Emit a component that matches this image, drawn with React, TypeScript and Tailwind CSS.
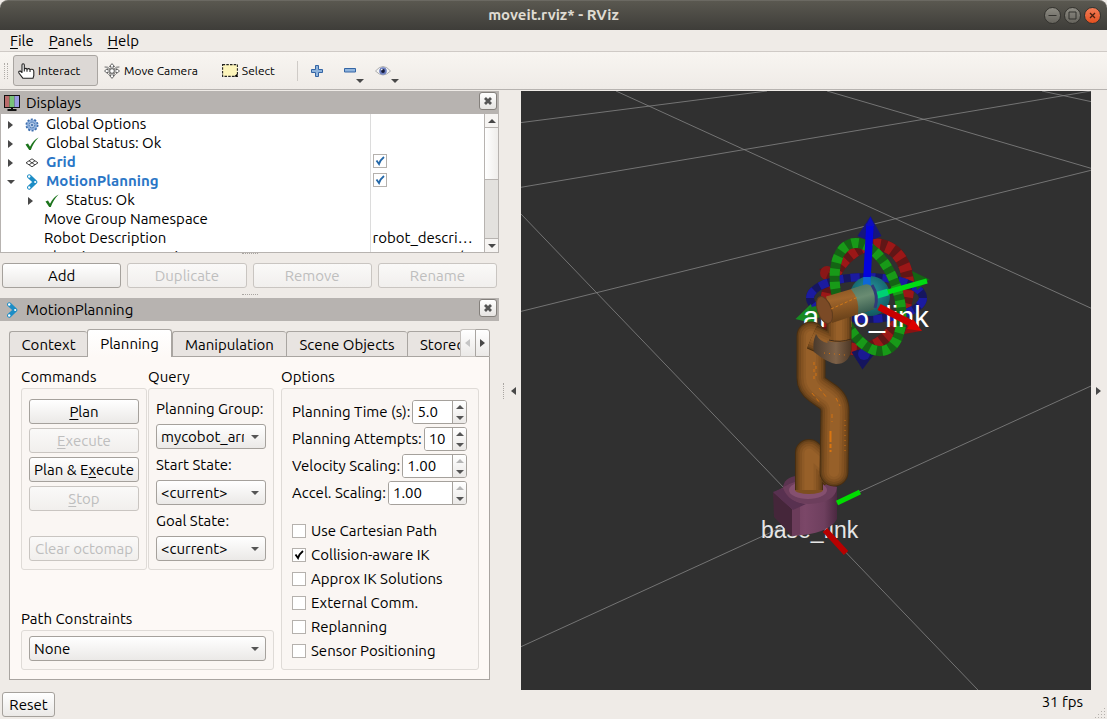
import React, { useState } from "react";

const displays = [
  { name: "Global Options", icon: "gear", arrow: "right", level: 0 },
  { name: "Global Status: Ok", icon: "check", arrow: "right", level: 0 },
  { name: "Grid", icon: "grid", arrow: "right", level: 0, checkable: true },
  { name: "MotionPlanning", icon: "motion", arrow: "down", level: 0, checkable: true },
  { name: "Status: Ok", icon: "check", arrow: "right", level: 1 },
  { name: "Move Group Namespace", level: 2 },
  { name: "Robot Description", level: 2, value: "robot_descri…" },
  { name: "Planning Scene Topic", level: 2, value: "move_group/…" },
];

const tabs = [
  { name: "Context", width: "w-[78px]" },
  { name: "Planning", width: "w-[85px]" },
  { name: "Manipulation", width: "w-[114px]" },
  { name: "Scene Objects", width: "w-[121px]" },
  { name: "Stored Scenes", width: "w-[120px]" },
];

const spins = [
  { label: "Planning Time (s):", value: "5.0" },
  { label: "Planning Attempts:", value: "10" },
  { label: "Velocity Scaling:", value: "1.00", max: true },
  { label: "Accel. Scaling:", value: "1.00", max: true },
];

const options = [
  "Use Cartesian Path",
  "Collision-aware IK",
  "Approx IK Solutions",
  "External Comm.",
  "Replanning",
  "Sensor Positioning",
];

const Triangle = ({ dir, className = "fill-[#484848]" }: { dir: string; className?: string }) => {
  const paths: Record<string, string> = {
    right: "M1 0 L6 4 L1 8 Z",
    left: "M6 0 L1 4 L6 8 Z",
    down: "M0 2 H8 L4 6 Z",
    up: "M0 6 H8 L4 2 Z",
  };
  return (
    <svg width="8" height="8" viewBox="0 0 8 8" className={className} aria-hidden="true">
      <path d={paths[dir]} />
    </svg>
  );
};

const MotionIcon = () => (
  <svg width="16" height="16" viewBox="0 0 16 16" aria-hidden="true">
    <path d="M5.2 2.4 L11.2 8 L5.2 13.6" fill="none" stroke="#1c8dc6" strokeWidth="4.2" strokeLinecap="round" strokeLinejoin="round" />
    <circle cx="5.2" cy="2.5" r="1.2" fill="#fff" />
    <circle cx="11.2" cy="8" r="1.1" fill="#fff" />
    <circle cx="5.2" cy="13.5" r="1.2" fill="#fff" />
  </svg>
);

const TreeIcon = ({ name }: { name?: string }) => {
  if (name === "gear") {
    return (
      <svg width="14" height="14" viewBox="0 0 14 14" aria-hidden="true">
        <circle cx="7" cy="7" r="5.6" fill="#8fb0dc" stroke="#3e6fae" strokeWidth="1.8" strokeDasharray="2 1.5" />
        <circle cx="7" cy="7" r="4.7" fill="#8fb0dc" />
        <circle cx="7" cy="7" r="2.8" fill="#b5cbe8" stroke="#3e6fae" strokeWidth="1" strokeDasharray="1.6 0.8" />
        <circle cx="7" cy="7" r="1" fill="#3465a4" />
      </svg>
    );
  }
  if (name === "check") {
    return (
      <svg width="14" height="14" viewBox="0 0 14 14" aria-hidden="true">
        <path d="M0.5 7.6 L3 6.6 L5 9.8 C7.5 5 10 2.3 13.6 0.5 C10 4 7.6 8 5.8 13 L4.2 13 Z" fill="#1c741c" />
      </svg>
    );
  }
  if (name === "grid") {
    return (
      <svg width="14" height="10" viewBox="0 0 14 10" fill="none" stroke="#444" aria-hidden="true">
        <path d="M7 0.8 L13 4.8 L7 8.8 L1 4.8 Z M4 2.8 L10 6.8 M10 2.8 L4 6.8" />
      </svg>
    );
  }
  if (name === "motion") return <MotionIcon />;
  return null;
};

const MenuItem = ({ first, rest }: { first: string; rest: string }) => (
  <button type="button" className="leading-5">
    <span className="underline underline-offset-2">{first}</span>
    {rest}
  </button>
);

const PushButton = ({ children, disabled, className = "w-full" }: { children: React.ReactNode; disabled?: boolean; className?: string }) => (
  <button
    type="button"
    disabled={disabled}
    className={`flex h-[25px] items-center justify-center whitespace-pre rounded-[3px] border border-[#a5a19c] bg-linear-to-b from-white to-[#ebe9e7] leading-5 disabled:border-[#c9c5c1] disabled:from-[#faf9f8] disabled:to-[#f1efed] disabled:text-[#bebebe] ${className}`}
  >
    {children}
  </button>
);

const ComboBox = ({ id, items }: { id: string; items: string[] }) => (
  <div className="grid items-center">
    <select
      id={id}
      className="col-start-1 row-start-1 h-[25px] w-full appearance-none overflow-hidden rounded-[3px] border border-[#a5a19c] bg-linear-to-b from-white to-[#ebe9e7] pl-1 pr-[21px] leading-5"
    >
      {items.map((item) => (
        <option key={item}>{item}</option>
      ))}
    </select>
    <span className="pointer-events-none col-start-1 row-start-1 mr-[7px] justify-self-end">
      <Triangle dir="down" className="fill-[#555]" />
    </span>
  </div>
);

const SpinBox = ({ label, value, max }: { label: string; value: string; max?: boolean }) => {
  const id = label.replace(/\W+/g, "-").toLowerCase();
  return (
    <div className="flex h-6 items-center gap-0.5">
      <label htmlFor={id} className="whitespace-nowrap">
        {label}
      </label>
      <div className="flex h-6 min-w-0 flex-1 overflow-hidden rounded-[3px] border border-[#a5a19c] bg-white">
        <input id={id} type="text" defaultValue={value} className="w-0 min-w-0 flex-1 bg-white pl-1 outline-none" />
        <div className="flex w-[14px] shrink-0 flex-col border-l border-[#a5a19c] bg-linear-to-b from-white to-[#ebe9e7]">
          <button type="button" aria-label={`Increase ${label}`} className="flex flex-1 items-center justify-center">
            <Triangle dir="up" className={max ? "fill-[#b5b5b5]" : "fill-[#555]"} />
          </button>
          <button type="button" aria-label={`Decrease ${label}`} className="flex flex-1 items-center justify-center">
            <Triangle dir="down" className="fill-[#555]" />
          </button>
        </div>
      </div>
    </div>
  );
};

const CheckBox = ({ id, label, defaultChecked, tint = "stroke-black" }: { id: string; label?: string; defaultChecked?: boolean; tint?: string }) => (
  <span className="grid size-[14px] shrink-0 place-items-center">
    <input
      id={id}
      type="checkbox"
      aria-label={label}
      defaultChecked={defaultChecked}
      className="peer col-start-1 row-start-1 size-[14px] appearance-none border border-[#b5b1ad] bg-white"
    />
    <svg viewBox="0 0 10 10" className={`pointer-events-none invisible col-start-1 row-start-1 size-[10px] fill-none peer-checked:visible ${tint}`} aria-hidden="true">
      <path d="M1.5 4.5 L4 8 C5 5 6.5 3 9 1" strokeWidth="1.9" />
    </svg>
  </span>
);

const DockTitle = ({ title, icon }: { title: string; icon: React.ReactNode }) => (
  <div className="flex h-[23px] items-center bg-[#b7b3b0] pl-1 pr-0.5">
    {icon}
    <h2 className="ml-1.5 flex-1 leading-5">{title}</h2>
    <button type="button" aria-label={`Close ${title}`} className="mt-px flex size-[18px] items-center justify-center self-start rounded-[3px] border border-[#84807c] bg-linear-to-b from-white to-[#e6e4e2]">
      <svg width="8" height="8" viewBox="0 0 8 8" stroke="#555" strokeWidth="2.8" aria-hidden="true">
        <path d="M1 1 L7 7 M7 1 L1 7" />
      </svg>
    </button>
  </div>
);

const Splitter = () => (
  <div className="flex h-[10px] justify-center">
    <div className="h-px w-4 border-t border-dotted border-[#a9a5a1]" />
  </div>
);

// stacked strokes, dark on the rim and light in the middle
const shades = [
  { inset: 0, color: "#4a2e10" },
  { inset: 2, color: "#63401a" },
  { inset: 5, color: "#75491d" },
  { inset: 9, color: "#835221" },
  { inset: 14, color: "#8e5a26" },
  { inset: 19, color: "#976029" },
];

const Tube = ({ d, width }: { d: string; width: number }) => (
  <g fill="none" strokeLinejoin="round">
    {shades.map((shade) => (
      <path key={shade.inset} d={d} stroke={shade.color} strokeWidth={Math.max(width - shade.inset, 2)} />
    ))}
  </g>
);

const RobotView = () => (
  <svg viewBox="521 91 570 599" preserveAspectRatio="xMidYMid slice" className="block w-full flex-1 bg-[#303030]" role="img" aria-label="Robot scene">
    <defs>
      <linearGradient id="baseFront" x1="0" x2="1">
        <stop offset="0" stopColor="#613450" />
        <stop offset="0.5" stopColor="#7b4768" />
        <stop offset="0.8" stopColor="#6e3f5e" />
        <stop offset="1" stopColor="#4a2840" />
      </linearGradient>
      <linearGradient id="pipe" x1="0" y1="0" x2="0.25" y2="1">
        <stop offset="0" stopColor="#7a4d1f" />
        <stop offset="0.4" stopColor="#a0652b" />
        <stop offset="1" stopColor="#643e18" />
      </linearGradient>
      <linearGradient id="tip" x1="0" y1="0" x2="0.25" y2="1">
        <stop offset="0" stopColor="#4a7260" />
        <stop offset="0.5" stopColor="#6a8c72" />
        <stop offset="1" stopColor="#3b5f52" />
      </linearGradient>
      <linearGradient id="wrist" x1="0" x2="1">
        <stop offset="0" stopColor="#4a3a2c" />
        <stop offset="0.6" stopColor="#7d6148" />
        <stop offset="1" stopColor="#4d3826" />
      </linearGradient>
      <radialGradient id="ball" cx="0.5" cy="0.4" r="0.6">
        <stop offset="0" stopColor="#2597a0" />
        <stop offset="1" stopColor="#12585e" />
      </radialGradient>
    </defs>

    {/* ground grid */}
    <g stroke="#858585" strokeWidth="0.8">
      <path d="M521 122.6 L767 91 M521 187.3 L1091 91 M521 311.4 L1091 170.3 M521 646.7 L1091 386" />
      <path d="M521 214 L978 690 M616 91 L1091 308.2 M827 91 L1091 168.3 M1042 91 L1091 101.6" />
    </g>

    <text x="761" y="538" fontSize="23" className="fill-[#e6e6e6] font-['Liberation_Sans',sans-serif]">base_link</text>

    {/* interactive marker */}
    <path d="M819 269 L838 266 L832 282 Z" fill="#5c1414" />
    <circle cx="827" cy="273" r="7" fill="#8a1717" />
    <g fill="none">
      <g transform="rotate(20 867 297)" strokeWidth="12">
        <ellipse cx="867" cy="297" rx="39" ry="54" stroke="#601616" />
        <ellipse cx="867" cy="297" rx="39" ry="54" stroke="#9c1717" strokeDasharray="7 6" />
      </g>
      <g strokeWidth="8">
        <ellipse cx="866.5" cy="298" rx="56.5" ry="21" stroke="#16165f" />
        <ellipse cx="866.5" cy="298" rx="56.5" ry="21" stroke="#1b1ba0" strokeDasharray="9 7" />
      </g>
    </g>
    <path d="M870.5 216 L857.5 236 Q870 243 881.5 236 Z" fill="#16167c" />
    <path d="M862.5 369.5 L851.5 352 Q864 346 875 353 Z" fill="#15155e" />
    <circle cx="864" cy="354" r="6" fill="#1a1a92" />
    <g transform="rotate(-18 868 297)" fill="none" strokeWidth="10">
      <ellipse cx="868" cy="297" rx="30" ry="56" stroke="#146414" />
      <ellipse cx="868" cy="297" rx="30" ry="56" stroke="#189a18" strokeDasharray="7 6" />
    </g>
    <circle cx="870" cy="296" r="20" fill="url(#ball)" />
    <path d="M795.5 319 L811 304 L815 324 Z" fill="#188a22" />
    <path d="M810 313.5 L829 309" stroke="#167a20" strokeWidth="12" />
    <text x="803" y="327" fontSize="29" className="fill-white font-['Liberation_Sans',sans-serif]">arm6_link</text>
    <path d="M929.5 279.5 L912 271 L917 290 Z" fill="#146414" />
    <path d="M877 295 L927 281" stroke="#00dc12" strokeWidth="5" />
    <path d="M876 295.5 L888 292" stroke="#00d074" strokeWidth="7" />
    <path d="M870 224 L867 278" stroke="#0404dc" strokeWidth="7.5" />
    <path d="M870.5 217 L866 226 H874.5 Z" fill="#0d0dc0" />
    <path d="M867 277 L866.8 286" stroke="#0d68d8" strokeWidth="7.5" />
    <path d="M904 334 L921 331 L910 319 Z" fill="#8a1212" />

    {/* base */}
    <ellipse cx="797" cy="488" rx="14" ry="12" fill="#5b3450" />
    <path d="M773 493 L784 487 Q806 473 837 487 L837 519 Q829 534 792 536 L786 528 L778 513 Z" fill="url(#baseFront)" />
    <path d="M773 492 L792 509 V536 L774 517 Z" fill="#45263a" />
    <path d="M792 510 L800 506 V534 L792 536 Z" fill="#6b3c5a" />
    <path d="M773 492 L783 488 Q788 502 806 504 L793 510 Z" fill="#583150" />
    <path d="M783 487 Q808 478 837 487 Q836 503 808 504 Q788 502 783 487 Z" fill="#6c3e5c" />
    <ellipse cx="808" cy="490" rx="19" ry="9" fill="#85506f" />
    <path d="M837 503 L860 492" stroke="#00dc00" strokeWidth="5" />
    <path d="M825 530 L846 553" stroke="#b80000" strokeWidth="6" />

    {/* arm segments */}
    <ellipse cx="809" cy="490" rx="14" ry="4" fill="#7d4e20" />
    <Tube d="M809 490 V453 L834 475" width={28} />
    <g strokeLinecap="round">
      <Tube d="M811 336 V378 Q811 385 818 390 L828 397 Q835 402 835 411 L834 472" width={29} />
    </g>
    <Tube d="M839 310 V349 L812 337" width={25} />
    <path d="M827.5 341 Q838 344 851 340 V350 Q849 364 836 364 Q826 362 814 352 Q812 343 816 334 Q820 342 827.5 343 Z" fill="url(#wrist)" />
    <path d="M829 340 Q840 343 851 339" stroke="#3d2a18" fill="none" />
    <g stroke="#d97510" strokeWidth="0.9" fill="none">
      <path strokeDasharray="3 4" d="M814 362 V380 M816 366 V378" />
      <path strokeDasharray="4 3" d="M812 393 L820 403 M819 388 L827 398 M836 398 L840 406 M832 414 V422" />
      <path strokeWidth="2" strokeDasharray="11 2 4 2" d="M830.5 431 V452" />
      <path strokeDasharray="1 4" d="M845 420 V453 M824 353 L845 355" />
    </g>

    <path d="M826 296.5 L860 286.5 Q870 283 874 291 Q878 301 874 309 L832 323 Z" fill="url(#pipe)" />
    <path d="M851 289 L865 284.5 Q871 283 875 292 Q878 302 874 309 L858 314 Q860 300 851 289 Z" fill="url(#tip)" />
    <ellipse cx="824.5" cy="310" rx="7" ry="14" transform="rotate(-19 824.5 310)" fill="#7b4a26" stroke="#5f3c1d" />
    <path d="M831 309 L858 297" stroke="#d07818" strokeWidth="1" strokeDasharray="3 2" />
    <path d="M872 285 Q879 296 875 308" fill="none" stroke="#323b78" strokeWidth="3" />

    {/* red axis */}
    <path d="M879 307 L914 325" stroke="#c80000" strokeWidth="7" />
    <path d="M913 319 L922 331 L907 329 Z" fill="#dc0000" />
  </svg>
);

const App = () => {
  const [activeTab, setActiveTab] = useState("Planning");

  return (
    <div className="flex min-h-screen flex-col bg-[#efebe7] font-['Ubuntu','Open_Sans',sans-serif] text-[15px] text-black">
      <header className="flex h-[30px] items-center rounded-t-lg border-t border-[#6b6962] bg-linear-to-b from-[#5a5850] to-[#3e3d39] pr-1.5">
        <h1 className="flex-1 pl-[63px] text-center font-bold text-[#dfdbd2]">moveit.rviz* - RViz</h1>
        <div className="flex gap-[3px]">
          <button type="button" aria-label="Minimize" className="flex size-[17px] items-center justify-center rounded-full border border-[#33322e] bg-linear-to-b from-[#8d8b83] to-[#66645d]">
            <svg width="9" height="9" viewBox="0 0 9 9" stroke="#33322e" aria-hidden="true">
              <path d="M0.5 4.5 H8.5" />
            </svg>
          </button>
          <button type="button" aria-label="Maximize" className="flex size-[17px] items-center justify-center rounded-full border border-[#33322e] bg-linear-to-b from-[#8d8b83] to-[#66645d]">
            <svg width="9" height="9" viewBox="0 0 9 9" fill="none" stroke="#33322e" aria-hidden="true">
              <path d="M1 1 H8 V8 H1 Z" />
            </svg>
          </button>
          <button type="button" aria-label="Close" className="flex size-[17px] items-center justify-center rounded-full border border-[#33322e] bg-linear-to-b from-[#f37c55] to-[#e4501d]">
            <svg width="7" height="7" viewBox="0 0 7 7" stroke="#4a2010" strokeWidth="1.3" aria-hidden="true">
              <path d="M1 1 L6 6 M6 1 L1 6" />
            </svg>
          </button>
        </div>
      </header>

      <nav className="flex h-[22px] items-center gap-[15px] border-b border-[#cfcac6] pl-[10px]">
        <MenuItem first="F" rest="ile" />
        <MenuItem first="P" rest="anels" />
        <MenuItem first="H" rest="elp" />
      </nav>

      <div className="flex h-[38px] items-center border-b border-[#b7b3b0] bg-linear-to-b from-[#f8f5f1] to-[#efebe7] pl-1 text-xs">
        <div className="h-4 w-1 border-x border-dotted border-[#b0aca8]" />
        <button type="button" aria-pressed="true" className="ml-[5px] flex h-[31px] w-[85px] items-center gap-[3px] rounded-[3px] border border-[#a9a5a1] bg-[#dcd8d5] pl-1">
          <svg width="17" height="16" viewBox="0 0 17 16" fill="#fff" stroke="#222" strokeWidth="1.1" strokeLinejoin="round" aria-hidden="true">
            <path d="M4 9.5 V2 Q4 0.7 5.1 0.7 Q6.3 0.7 6.3 2 V6 Q8 4.8 9 6.2 Q11 5 12 6.5 Q15.8 5.5 15.8 8.5 V12.5 L15 15.3 H5 L0.9 10 Q0.3 7.8 2.3 8 Z M9 6.2 V8.8 M12 6.5 V9 M6.3 6 V8.5" />
          </svg>
          Interact
        </button>
        <button type="button" className="ml-1.5 flex items-center gap-1">
          <svg width="16" height="16" viewBox="0 0 16 16" fill="#fff" stroke="#555" strokeWidth="0.9" aria-hidden="true">
            <path d="M8 0.6 L10.5 3.5 H9 V7 H12.5 V5.5 L15.5 8 L12.5 10.5 V9 H9 V12.5 H10.5 L8 15.4 L5.5 12.5 H7 V9 H3.5 V10.5 L0.5 8 L3.5 5.5 V7 H7 V3.5 H5.5 Z" />
            <path d="M0.6 4 L3.5 4.2 L6 6.2 M15.4 4 L12.5 4.2 L10 6.2 M4.5 12 L7 9 M11.5 12 L9 9" />
            <circle cx="8" cy="8" r="2.3" />
          </svg>
          Move Camera
        </button>
        <button type="button" className="ml-6 flex items-center gap-1">
          <svg width="16" height="13" viewBox="0 0 16 13" aria-hidden="true">
            <rect x="0.6" y="0.6" width="14.8" height="11.8" fill="#fdf5bb" stroke="#222" strokeWidth="1.1" strokeDasharray="2.5 1.2" />
            <path d="M12 12.5 L15.5 9.5 V12.5 Z" />
          </svg>
          Select
        </button>
        <div className="ml-[22px] h-5 w-px bg-[#cfcbc7]" />
        <button type="button" aria-label="Add tool" className="ml-[13px]">
          <svg width="12" height="12" viewBox="0 0 12 12" aria-hidden="true">
            <path d="M4.5 0.5 H7.5 V4.5 H11.5 V7.5 H7.5 V11.5 H4.5 V7.5 H0.5 V4.5 H4.5 Z" fill="#8fb4dd" stroke="#3465a4" />
          </svg>
        </button>
        <button type="button" aria-label="Remove tool" className="ml-[21px] flex h-7 items-center">
          <svg width="12" height="5" viewBox="0 0 12 5" aria-hidden="true">
            <path d="M0.5 0.5 H11.5 V4 H0.5 Z" fill="#8fb4dd" stroke="#3465a4" />
          </svg>
          <span className="flex self-end">
            <Triangle dir="down" />
          </span>
        </button>
        <button type="button" aria-label="View tools" className="ml-[11px] flex h-7 items-center">
          <svg width="16" height="12" viewBox="0 0 16 12" aria-hidden="true">
            <path d="M0.5 6 Q8 -3 15.5 6 Q8 14 0.5 6 Z" fill="#f4f4f4" stroke="#a5a5a5" strokeWidth="0.9" />
            <circle cx="8" cy="6" r="3.8" fill="#6d7fc0" />
            <circle cx="8" cy="6" r="1.9" fill="#151a38" />
            <circle cx="6.8" cy="4.6" r="0.8" fill="#fff" />
          </svg>
          <span className="flex self-end">
            <Triangle dir="down" />
          </span>
        </button>
      </div>

      <main className="flex flex-1 pt-px">
        <section className="flex w-[499px] shrink-0 flex-col">
          <DockTitle
            title="Displays"
            icon={
              <svg width="16" height="16" viewBox="0 0 16 16" aria-hidden="true">
                <path d="M0 0 H16 V13 H0 Z" fill="#111" />
                <path d="M1 1 H5.5 V12 H1 Z" fill="#b96b6b" />
                <path d="M5.5 1 H10.5 V12 H5.5 Z" fill="#79c279" />
                <path d="M10.5 1 H15 V12 H10.5 Z" fill="#9a9ae0" />
                <path d="M7 13 H9 V14 H12.5 V16 H3.5 V14 H7 Z" fill="#111" />
              </svg>
            }
          />
          <div className="flex h-[139px] overflow-hidden border-x border-b border-[#b7b3b0] bg-white">
            <div className="flex-1 overflow-hidden">
              <table className="w-full table-fixed border-collapse">
                <tbody>
                  {displays.map((item) => (
                    <tr key={item.name} className="h-[19px]">
                      <td className="p-0">
                        <div className={`flex h-[19px] items-center whitespace-nowrap pt-0.5 ${item.level === 0 ? "pl-1.5" : item.level === 1 ? "pl-[26px]" : "pl-[43px]"}`}>
                          {item.arrow && (
                            <>
                              <Triangle dir={item.arrow} />
                              <span className="ml-[9px] mr-1.5 flex w-4 justify-center">
                                <TreeIcon name={item.icon} />
                              </span>
                            </>
                          )}
                          <span className={item.checkable ? "font-bold text-[#2a76c6]" : ""}>{item.name}</span>
                        </div>
                      </td>
                      <td className="w-[114px] border-l border-[#dcdcdc] p-0 pl-0.5">
                        <div className={`flex h-[19px] items-center ${item.checkable ? "pb-px" : "pt-0.5"}`}>
                          {item.checkable && <CheckBox id={`show-${item.name}`} label={`Show ${item.name}`} defaultChecked tint="stroke-[#2367a8]" />}
                          {item.value}
                        </div>
                      </td>
                    </tr>
                  ))}
                </tbody>
              </table>
            </div>
            <div className="flex w-[14px] flex-col border-l border-[#b7b3b0] bg-[#e3e1de]">
              <button type="button" aria-label="Scroll up" className="flex h-[14px] items-center justify-center border-b border-[#b7b3b0] bg-[#f6f4f2]">
                <Triangle dir="up" />
              </button>
              <div className="h-[52px] border-b border-[#b7b3b0] bg-linear-to-r from-white to-[#efedeb]" />
              <button type="button" aria-label="Scroll down" className="mt-auto flex h-[14px] items-center justify-center border-t border-[#b7b3b0] bg-[#f6f4f2]">
                <Triangle dir="down" />
              </button>
            </div>
          </div>
          <Splitter />
          <div className="grid grid-cols-4 gap-1.5 px-0.5">
            <PushButton>Add</PushButton>
            <PushButton disabled>Duplicate</PushButton>
            <PushButton disabled>Remove</PushButton>
            <PushButton disabled>Rename</PushButton>
          </div>
          <div className="pt-1.5 [&>div]:h-1">
            <Splitter />
          </div>

          <DockTitle title="MotionPlanning" icon={<MotionIcon />} />
          <div className="flex flex-1 flex-col px-[9px] pb-[10px] pt-2">
            <div className="flex h-7 items-end" role="tablist">
              <div className="flex h-7 min-w-0 flex-1 items-end overflow-hidden">
                {tabs.map((tab) => (
                  <button
                    key={tab.name}
                    type="button"
                    role="tab"
                    aria-selected={tab.name === activeTab}
                    onClick={() => setActiveTab(tab.name)}
                    className={`shrink-0 whitespace-nowrap rounded-t-[3px] border-l border-t border-[#a9a5a1] ${tab.width} ${
                      tab.name === activeTab ? "h-7 border-r bg-linear-to-b from-white to-[#fdf9f6] pt-0.5" : "h-[26px] border-b bg-[#e8e4e1] pt-0.5"
                    }`}
                  >
                    {tab.name}
                  </button>
                ))}
              </div>
              <button type="button" aria-label="Previous tabs" className="flex h-7 w-[15px] items-center justify-center rounded-tl-[3px] border border-r-0 border-[#c5c1bd] bg-linear-to-b from-white to-[#ebe9e7]">
                <Triangle dir="left" className="fill-[#c5c5c5]" />
              </button>
              <button type="button" aria-label="Next tabs" className="flex h-7 w-[15px] items-center justify-center rounded-tr-[3px] border border-[#a9a5a1] bg-linear-to-b from-white to-[#ebe9e7]">
                <Triangle dir="right" />
              </button>
            </div>
            <div className="flex flex-1 gap-[7px] border border-t-0 border-[#a9a5a1] bg-[#fdf9f6] pb-[9px] pl-[11px] pr-[10px] pt-[9px]">
              <div className="flex w-[253px] shrink-0 flex-col justify-between">
                <div className="flex gap-px">
                  <div className="flex flex-1 flex-col">
                    <h3 className="h-[22px] leading-[22px]">Commands</h3>
                    <div className="flex h-[182px] flex-col gap-1 rounded-[3px] border border-[#dfdbd7] bg-[#faf6f3] px-[7px] pb-2 pt-[10px]">
                      <PushButton>
                        <span className="underline underline-offset-2">P</span>lan
                      </PushButton>
                      <PushButton disabled>
                        <span className="underline underline-offset-2">E</span>xecute
                      </PushButton>
                      <PushButton>
                        Plan &amp; E<span className="underline underline-offset-2">x</span>ecute
                      </PushButton>
                      <PushButton disabled>
                        <span className="underline underline-offset-2">S</span>top
                      </PushButton>
                      <PushButton disabled className="mt-auto w-full">
                        Clear octomap
                      </PushButton>
                    </div>
                  </div>
                  <div className="flex flex-1 flex-col">
                    <h3 className="h-[22px] leading-[22px]">Query</h3>
                    <div className="flex h-[182px] flex-col rounded-[3px] border border-[#dfdbd7] bg-[#faf6f3] px-[7px] pt-1">
                      <label htmlFor="planning-group" className="whitespace-nowrap leading-[31px]">
                        Planning Group:
                      </label>
                      <ComboBox id="planning-group" items={["mycobot_arm"]} />
                      <label htmlFor="start-state" className="leading-[31px]">
                        Start State:
                      </label>
                      <ComboBox id="start-state" items={["<current>"]} />
                      <label htmlFor="goal-state" className="leading-[31px]">
                        Goal State:
                      </label>
                      <ComboBox id="goal-state" items={["<current>"]} />
                    </div>
                  </div>
                </div>
                <div>
                  <label htmlFor="path-constraints" className="block h-[22px] leading-[22px]">
                    Path Constraints
                  </label>
                  <div className="h-10 rounded-[3px] border border-[#dfdbd7] bg-[#faf6f3] px-[7px] pt-[5px]">
                    <ComboBox id="path-constraints" items={["None"]} />
                  </div>
                </div>
              </div>
              <div className="flex min-w-0 flex-1 flex-col">
                <h3 className="h-[22px] leading-[22px]">Options</h3>
                <div className="flex flex-1 flex-col rounded-[3px] border border-[#dfdbd7] bg-[#faf6f3] pl-[10px] pr-[11px] pt-[11px]">
                  <div className="flex flex-col gap-[3px]">
                    {spins.map((spin) => (
                      <SpinBox key={spin.label} {...spin} />
                    ))}
                  </div>
                  <div className="mt-[14px] flex flex-col">
                    {options.map((option) => (
                      <div key={option} className="flex h-6 items-center gap-[5px]">
                        <CheckBox id={option} defaultChecked={option === "Collision-aware IK"} />
                        <label htmlFor={option} className="pt-px">
                          {option}
                        </label>
                      </div>
                    ))}
                  </div>
                </div>
              </div>
            </div>
          </div>
        </section>

        <div className="flex w-[22px] shrink-0 items-center justify-center gap-1.5">
          <div className="h-4 border-l border-dotted border-[#a9a5a1]" />
          <button type="button" aria-label="Hide left dock">
            <Triangle dir="left" />
          </button>
        </div>
        <div className="flex min-w-0 flex-1 flex-col">
          <RobotView />
        </div>
        <div className="flex w-4 shrink-0 items-center justify-center">
          <button type="button" aria-label="Hide right dock">
            <Triangle dir="right" />
          </button>
        </div>
      </main>

      <footer className="flex h-[29px] items-center justify-between pl-0.5">
        <PushButton className="w-[53px]">Reset</PushButton>
        <div className="flex h-full gap-3 pr-px">
          <span className="leading-6">31 fps</span>
          <svg width="11" height="11" viewBox="0 0 11 11" className="self-end fill-[#b5b1ad]" aria-hidden="true">
            <path d="M9 0 h1 v1 h-1 Z M9 3 h1 v1 h-1 Z M9 6 h1 v1 h-1 Z M9 9 h1 v1 h-1 Z M6 3 h1 v1 h-1 Z M6 6 h1 v1 h-1 Z M6 9 h1 v1 h-1 Z M3 6 h1 v1 h-1 Z M3 9 h1 v1 h-1 Z M0 9 h1 v1 h-1 Z" />
          </svg>
        </div>
      </footer>
    </div>
  );
};

export default App;
